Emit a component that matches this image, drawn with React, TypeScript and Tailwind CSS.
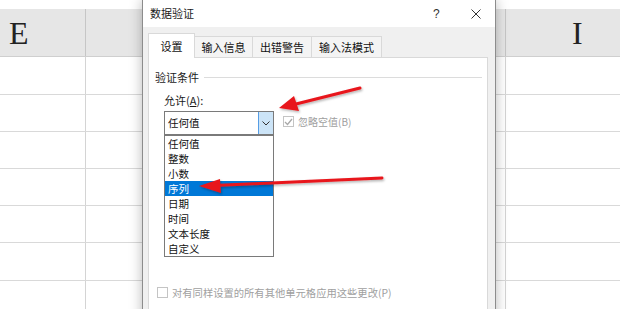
const cjk = { fontFamily: '"Noto Sans CJK SC", "Noto Sans", sans-serif' };

const options = ['任何值', '整数', '小数', '序列', '日期', '时间', '文本长度', '自定义'];
const rowHeights = [38, 37, 37, 37, 37, 38, 30];
const colWidths = [86, 210, 210, 150];

// ─── Spreadsheet behind the dialog ────────────────────────────────────────────
function Sheet() {
  return (
    <div className="flex flex-col bg-white">
      <div className="h-[9px] bg-white" />
      <div className="flex h-[48px] bg-[#e6e6e6] border-b border-[#cfcfcf]">
        {colWidths.map((w, i) => (
          <div
            key={i}
            style={{ width: w }}
            className="shrink-0 h-full border-r border-[#c6c6c6] flex items-center"
          >
            {i === 0 && (
              <span className="pl-[9px] text-[32px] leading-none text-[#222]" style={{ fontFamily: '"Liberation Serif", serif' }}>
                E
              </span>
            )}
            {i === 3 && (
              <span className="pl-[66px] text-[32px] leading-none text-[#222]" style={{ fontFamily: '"Liberation Serif", serif' }}>
                I
              </span>
            )}
          </div>
        ))}
      </div>
      {rowHeights.map((h, r) => (
        <div key={r} className="flex border-b border-[#d9d9d9]" style={{ height: h }}>
          {colWidths.map((w, i) => (
            <div key={i} style={{ width: w }} className="shrink-0 h-full border-r border-[#d4d4d4]" />
          ))}
        </div>
      ))}
    </div>
  );
}

// ─── Small checkbox ───────────────────────────────────────────────────────────
function Check({ checked }: { checked?: boolean }) {
  return (
    <span className="w-[11px] h-[11px] border border-[#c4c4c4] bg-white flex items-center justify-center shrink-0">
      {checked && (
        <svg width="9" height="8" viewBox="0 0 9 8">
          <polyline points="1,4 3.5,6.5 8,1" fill="none" stroke="#a8a8a8" strokeWidth="1.3" />
        </svg>
      )}
    </span>
  );
}

// ─── Data validation dialog ───────────────────────────────────────────────────
function Dialog() {
  return (
    <div
      className="absolute left-[142px] top-0 w-[354px] h-[330px] flex flex-col border-x border-[#8c8c8c] bg-[#f0f0f0] shadow-[0_0_12px_rgba(0,0,0,0.28)]"
      style={cjk}
    >
      {/* Title bar */}
      <div className="h-[27px] bg-white flex items-center pl-[7px] shrink-0">
        <span className="text-[11px] text-[#1a1a1a]">数据验证</span>
        <span className="ml-auto text-[12px] text-[#333] w-[10px]" style={{ fontFamily: '"Liberation Sans", sans-serif' }}>?</span>
        <span className="ml-[28px] mr-[14px] text-[#333]">
          <svg width="10" height="10" viewBox="0 0 10 10">
            <path d="M0.5 0.5 L9.5 9.5 M9.5 0.5 L0.5 9.5" stroke="#333" strokeWidth="1" />
          </svg>
        </span>
      </div>

      {/* Tabs */}
      <div className="flex items-end h-[24px] mt-[6px] pl-[5px] shrink-0">
        <div className="w-[47px] h-[25px] -mb-px bg-white border border-b-0 border-[#d9d9d9] flex items-center justify-center text-[11px] text-[#111] relative z-10">
          设置
        </div>
        {[
          ['输入信息', 58],
          ['出错警告', 59],
          ['输入法模式', 70],
        ].map(([label, w]) => (
          <div
            key={label as string}
            style={{ width: w as number }}
            className="h-[21px] bg-[#f4f4f4] border border-l-0 border-b-0 border-[#d9d9d9] flex items-center justify-center text-[11px] text-[#111]"
          >
            {label}
          </div>
        ))}
      </div>

      {/* Panel */}
      <div className="ml-[5px] w-[340px] flex-1 bg-white border border-[#d9d9d9] flex flex-col">
        <div className="flex items-center mt-[12px] pl-[6px] pr-[5px] h-[14px]">
          <span className="text-[11px] leading-[14px] text-[#1a1a1a]">验证条件</span>
          <span className="flex-1 h-px bg-[#dcdcdc] ml-[5px]" />
        </div>

        <div className="mt-[9px] pl-[15px] text-[11px] leading-[14px] text-[#1a1a1a]">
          允许(<span className="underline">A</span>):
        </div>

        <div className="mt-[4px] pl-[15px] flex items-center">
          <div className="relative w-[110px] h-[24px] border border-[#7a7a7a] bg-white flex items-center">
            <span className="pl-[3px] text-[10.5px] text-[#111]">任何值</span>
            <span className="ml-auto h-full w-[15px] bg-[#cce4f7] border-l border-[#569de5] flex items-center justify-center">
              <svg width="8" height="5" viewBox="0 0 8 5">
                <polyline points="0.5,0.5 4,4 7.5,0.5" fill="none" stroke="#333" strokeWidth="1" />
              </svg>
            </span>

            {/* Open list */}
            <div className="absolute left-[-1px] top-[23px] w-[110px] border border-[#7a7a7a] bg-white z-20 flex flex-col">
              {options.map((o) => (
                <div
                  key={o}
                  className={
                    o === '序列'
                      ? 'h-[15px] pl-[3px] text-[10.5px] leading-[15px] bg-[#0078d7] text-white'
                      : 'h-[15px] pl-[3px] text-[10.5px] leading-[15px] text-[#111]'
                  }
                >
                  {o}
                </div>
              ))}
            </div>
          </div>

          <div className="ml-[9px] mt-[-3px] flex items-center gap-[4px]">
            <Check checked />
            <span className="text-[10px] text-[#a0a0a0]">忽略空值(B)</span>
          </div>
        </div>

        <div className="mt-[150px] pl-[8px] flex items-center gap-[4px]">
          <Check />
          <span className="text-[10.3px] text-[#a0a0a0]">对有同样设置的所有其他单元格应用这些更改(P)</span>
        </div>
      </div>
    </div>
  );
}

// ─── Red annotation arrows ────────────────────────────────────────────────────
function Arrows() {
  return (
    <svg className="absolute inset-0 pointer-events-none z-30" width="620" height="309" viewBox="0 0 620 309">
      <defs>
        <filter id="sh" x="-10%" y="-50%" width="120%" height="200%">
          <feDropShadow dx="1" dy="1.5" stdDeviation="1" floodColor="#000" floodOpacity="0.3" />
        </filter>
      </defs>
      <g filter="url(#sh)" fill="#e8151b" stroke="#e8151b">
        <line x1="360" y1="88" x2="292" y2="105" strokeWidth="3" strokeLinecap="round" />
        <polygon points="279,108 294,96 299,111" stroke="none" />
        <line x1="382" y1="178" x2="214" y2="185.5" strokeWidth="3" strokeLinecap="round" />
        <polygon points="199,186 220,179 221,193" stroke="none" />
      </g>
    </svg>
  );
}

export default function App() {
  return (
    <div className="relative w-[620px] h-[309px] overflow-hidden bg-white">
      <Sheet />
      <Dialog />
      <Arrows />
    </div>
  );
}
